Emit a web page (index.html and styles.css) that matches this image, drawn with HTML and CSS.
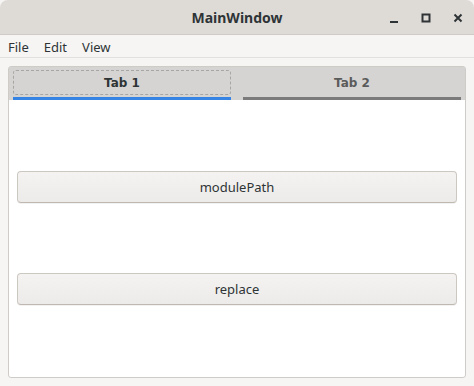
FILE: index.html
```html
<!DOCTYPE html>
<html>
<head>
<meta charset="utf-8">
<link rel="stylesheet" href="styles.css">
</head>
<body>
<div class="window">
  <div class="titlebar">
    <div class="title">MainWindow</div>
    <div class="controls">
      <svg class="ctl" width="16" height="16" viewBox="0 0 16 16"><rect x="4" y="11" width="8" height="2" fill="#2e3436"/></svg>
      <svg class="ctl" width="16" height="16" viewBox="0 0 16 16"><rect x="4.5" y="4.5" width="7" height="7" fill="none" stroke="#2e3436" stroke-width="2"/></svg>
      <svg class="ctl" width="16" height="16" viewBox="0 0 16 16"><path d="M4.5 4.5 L11.5 11.5 M11.5 4.5 L4.5 11.5" stroke="#2e3436" stroke-width="2"/></svg>
    </div>
  </div>
  <div class="menubar">
    <span class="menu">File</span>
    <span class="menu">Edit</span>
    <span class="menu">View</span>
  </div>
  <div class="main">
    <div class="tabwidget">
      <div class="tabbar">
        <div class="tab active"><span class="focus">Tab 1</span></div>
        <div class="tab">Tab 2</div>
      </div>
      <div class="content">
        <button class="btn">modulePath</button>
        <button class="btn">replace</button>
      </div>
    </div>
  </div>
</div>
</body>
</html>
```
FILE: styles.css
```css
html, body {
  margin: 0;
  padding: 0;
  background: #f6f5f4;
}
.window {
  width: 474px;
  height: 386px;
  display: flex;
  flex-direction: column;
  font-family: "Noto Sans", "Open Sans", sans-serif;
  color: #2e3436;
}
.titlebar {
  height: 35px;
  box-sizing: border-box;
  background: #dedad6;
  border-bottom: 1px solid #d0cbc6;
  border-radius: 8px 8px 0 0;
  display: grid;
  grid-template-columns: 1fr auto 1fr;
  align-items: center;
}
.title {
  grid-column: 2;
  font-weight: bold;
  font-size: 14px;
  color: #2e3436;
}
.controls {
  grid-column: 3;
  justify-self: end;
  display: flex;
  gap: 16px;
  padding-right: 8px;
  padding-top: 1px;
}
.menubar {
  height: 23px;
  box-sizing: border-box;
  border-bottom: 1px solid #e3e0dd;
  display: flex;
  align-items: center;
  padding-left: 8px;
  padding-top: 1px;
  gap: 15px;
  font-size: 13px;
  color: #2e3436;
}
.main {
  flex: 1;
  padding: 8px 8px 8px 8px;
  display: flex;
}
.tabwidget {
  flex: 1;
  border: 1px solid #cfcbc7;
  border-radius: 3px;
  display: flex;
  flex-direction: column;
  background: #ffffff;
}
.tabbar {
  background: #d6d4d2;
  display: flex;
  gap: 12px;
  padding: 3px 4px 0 4px;
  height: 33px;
  box-sizing: border-box;
}
.tab {
  flex: 1;
  font-family: "DejaVu Sans", sans-serif;
  font-weight: bold;
  font-size: 12px;
  color: #5b5b5b;
  display: flex;
  align-items: stretch;
  padding-bottom: 2px;
  border-bottom: 3px solid #7b7b7b;
  text-align: center;
}
.tab:not(.active) {
  justify-content: center;
  align-items: center;
}
.tab.active {
  border-bottom-color: #3584e4;
  color: #2e3436;
}
.focus {
  flex: 1;
  border: 1px dashed #a8a6a4;
  border-radius: 3px;
  display: flex;
  align-items: center;
  justify-content: center;
}
.content {
  flex: 1;
  display: flex;
  flex-direction: column;
  padding: 71px 8px 0 8px;
  gap: 70px;
}
.btn {
  height: 32px;
  font-family: "Noto Sans", "Open Sans", sans-serif;
  font-size: 13px;
  color: #2e3436;
  background: linear-gradient(#f4f3f2, #edebe9);
  border: 1px solid #cdc7c2;
  border-bottom-color: #bfb8b1;
  border-radius: 4px;
  box-shadow: 0 1px 0 rgba(0,0,0,0.05);
  padding: 0;
}
```
